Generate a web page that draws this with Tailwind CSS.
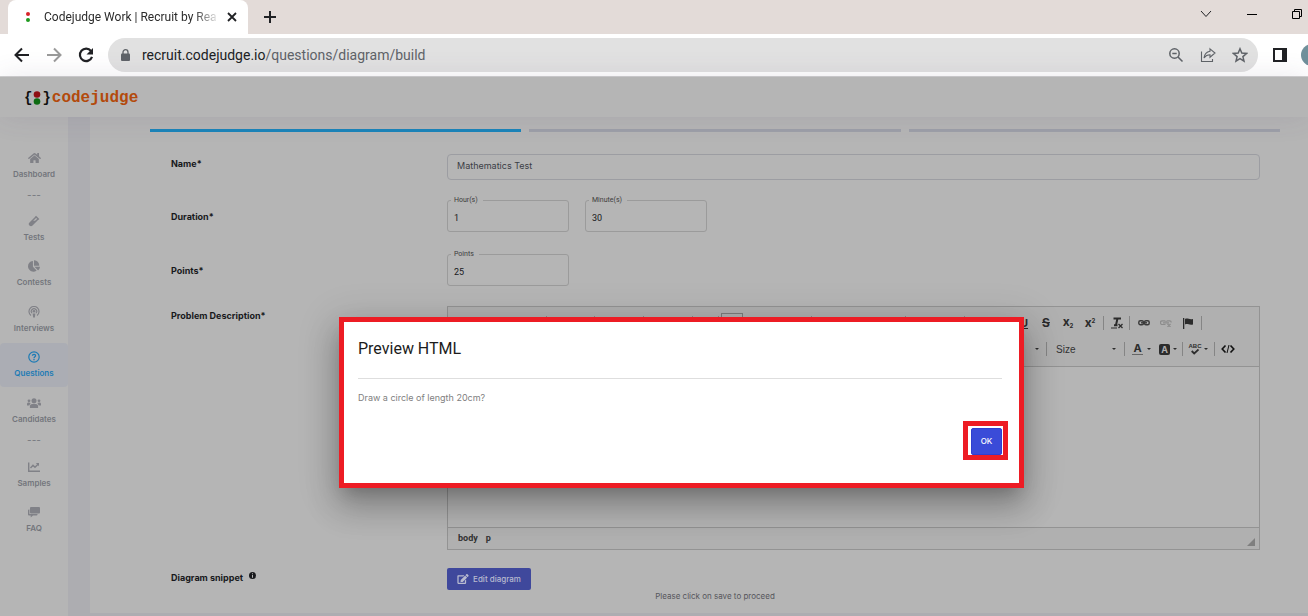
<!DOCTYPE html>
<html lang="en">
  <head>
    <meta charset="UTF-8" />
    <meta name="viewport" content="width=device-width, initial-scale=1.0" />
    <title>Codejudge Work | Recruit by Real Work</title>
    <script src="https://cdn.jsdelivr.net/npm/@tailwindcss/browser@4"></script>
  </head>
  <body class="h-screen flex flex-col overflow-hidden bg-[#b5b5b5] font-['Inter',sans-serif] text-[9px]">
    <!-- Tab strip -->
    <div class="h-[34px] shrink-0 bg-[#e3dbd8] flex items-end pl-2">
      <div class="h-[34px] w-60 bg-white rounded-t-lg flex items-center pl-4 pr-2.5 font-['Roboto',sans-serif]">
        <svg class="w-2 h-3 shrink-0" viewBox="0 0 8 12">
          <circle cx="4" cy="3" r="2" fill="#d8232a" />
          <circle cx="4" cy="9" r="2" fill="#1f9a1f" />
        </svg>
        <span class="ml-3 w-[176px] whitespace-nowrap text-xs text-[#2b2b2b] mask-r-from-85% mask-r-to-100%"
          >Codejudge Work | Recruit by Rea</span
        >
        <button type="button" aria-label="Close tab" class="ml-auto">
          <svg class="size-3" viewBox="0 0 12 12" stroke="#202124" stroke-width="1.800">
            <path d="M2 2l8 8M10 2l-8 8" />
          </svg>
        </button>
      </div>
      <button type="button" aria-label="New tab" class="ml-4 self-center">
        <svg class="size-3" viewBox="0 0 12 12" stroke="#202124" stroke-width="2">
          <path d="M6 0v12M0 6h12" />
        </svg>
      </button>
      <div class="ml-auto self-start flex items-center gap-[35px] h-7 pr-[6px]">
        <button type="button" aria-label="Search tabs">
          <svg class="w-3 h-2" viewBox="0 0 12 8" fill="none" stroke="#202124"><path d="M1 1l5 5.500 5-5.500" /></svg>
        </button>
        <button type="button" aria-label="Minimize">
          <svg class="w-[10px] h-3" viewBox="0 0 10 12"><path d="M0 6h10v1H0z" /></svg>
        </button>
        <button type="button" aria-label="Restore">
          <svg class="size-[10px]" viewBox="0 0 10 10" fill="none" stroke="#000">
            <path d="M.5 2.500h7v7h-7zM2.500 2.500v-2h7v7h-2" />
          </svg>
        </button>
      </div>
    </div>

    <!-- Toolbar -->
    <div class="h-[43px] shrink-0 bg-white border-b border-[#d0d0d0] flex items-center pl-[14px] overflow-hidden">
      <button type="button" aria-label="Back">
        <svg class="size-4" viewBox="0 0 16 16" fill="none" stroke="#202124" stroke-width="2">
          <path d="M15 8H2M8 1.500L1.500 8 8 14.500" />
        </svg>
      </button>
      <button type="button" aria-label="Forward" class="ml-4">
        <svg class="size-4" viewBox="0 0 16 16" fill="none" stroke="#9a9a9a" stroke-width="2">
          <path d="M1 8h13M8 1.500L14.500 8 8 14.500" />
        </svg>
      </button>
      <button type="button" aria-label="Reload" class="ml-4">
        <svg class="size-4" viewBox="0 0 16 16">
          <path d="M13 4A6.200 6.200 0 1 0 14 9.800" fill="none" stroke="#202124" stroke-width="2.200" />
          <path d="M15 1v6.500H8.500z" fill="#202124" />
        </svg>
      </button>
      <div class="ml-[14px] h-[34px] flex-1 rounded-full bg-[#e1e1e1] flex items-center pl-[13px] pr-[10px]">
        <svg class="w-[9px] h-3 shrink-0" viewBox="0 0 9 12">
          <path d="M2 5V3.200a2.500 2.500 0 0 1 5 0V5" fill="none" stroke="#5f6368" stroke-width="1.300" />
          <rect x="0" y="4.500" width="9" height="7.500" rx="1" fill="#5f6368" />
        </svg>
        <p class="ml-3 flex-1 font-['Roboto',sans-serif] text-sm text-[#5f6368]">
          <span class="text-[#202124]">recruit.codejudge.io</span>/questions/diagram/build
        </p>
        <div class="flex items-center gap-4">
          <button type="button" aria-label="Zoom">
            <svg class="size-4" viewBox="0 0 16 16" fill="none" stroke="#5f6368" stroke-width="1.500">
              <circle cx="6.500" cy="6.500" r="4.700" />
              <path d="M10 10l4.500 4.500M4.300 6.500h4.400" />
            </svg>
          </button>
          <button type="button" aria-label="Share">
            <svg class="size-4" viewBox="0 0 16 16" fill="none" stroke="#5f6368" stroke-width="1.100">
              <path d="M1.500 4.500v10h11v-2.500" />
              <path d="M10 1.800l5 4.200-5 4.200V7.800C7.500 7.800 5.500 8.800 4 11c.5-4 2.500-6.300 6-6.800z" />
            </svg>
          </button>
          <button type="button" aria-label="Bookmark">
            <svg class="size-4" viewBox="0 0 16 16" fill="none" stroke="#5f6368" stroke-width="1.500">
              <path d="M8 1.800l1.800 4.300 4.700.4-3.600 3.100 1.100 4.600L8 11.700l-4 2.500 1.100-4.600-3.600-3.100 4.700-.4z" />
            </svg>
          </button>
        </div>
      </div>
      <button type="button" aria-label="Side panel" class="ml-[15px]">
        <svg class="size-[14px]" viewBox="0 0 14 14">
          <path d="M0 0h14v14H0z" fill="#202124" />
          <path d="M2 2h7v10H2z" fill="#fff" />
        </svg>
      </button>
      <div class="ml-[14px] -mr-[15px] size-[22px] shrink-0 rounded-full bg-[#70909b]"></div>
    </div>

    <div class="relative flex-1 flex flex-col min-h-0">
      <header class="relative z-10 h-10 shrink-0 bg-[#b5b5b5] shadow-[0_0_28px_rgba(82,63,105,0.12)] flex items-center pt-0.5 pl-6">
        <a href="#" class="flex items-center font-['Liberation_Mono',monospace] font-bold text-base leading-5">
          <span class="flex items-center gap-px text-sm leading-5 text-[#111]"
            >{<svg class="w-2 h-[14px]" viewBox="0 0 8 14">
              <circle cx="4" cy="3.500" r="3.300" fill="#8f0f14" />
              <circle cx="4" cy="10.500" r="3.300" fill="#0d6b12" />
            </svg>}</span
          >
          <span class="ml-px text-[#b34a0c]">codejudge</span>
        </a>
      </header>

      <div class="flex-1 flex min-h-0">
        <!-- Sidebar -->
        <nav class="w-[68px] shrink-0 bg-[#b5b5b5] pt-[26px] text-center text-[8px] leading-3 font-semibold text-[#73757c]">
          <a href="#" class="h-11 flex flex-col items-center justify-center gap-1 pt-px">
            <svg class="w-[13px] h-3" viewBox="0 0 576 512" fill="#808187">
              <path
                d="M280.370 148.260L96 300.110V464a16 16 0 0 0 16 16l112.060-.29a16 16 0 0 0 15.920-16V368a16 16 0 0 1 16-16h64a16 16 0 0 1 16 16v95.640a16 16 0 0 0 16 16.050L464 480a16 16 0 0 0 16-16V300L295.670 148.260a12.190 12.190 0 0 0-15.300 0zM571.600 251.470L488 182.560V44.050a12 12 0 0 0-12-12h-56a12 12 0 0 0-12 12v72.610L318.470 43a48 48 0 0 0-61 0L4.340 251.470a12 12 0 0 0-1.600 16.900l25.500 31A12 12 0 0 0 45.150 301l235.220-193.740a12.190 12.190 0 0 1 15.300 0L530.900 301a12 12 0 0 0 16.900-1.600l25.500-31a12 12 0 0 0-1.700-16.930z"
              />
            </svg>
            Dashboard
          </a>
          <p class="h-[19px] leading-4 font-normal text-[10px]">---</p>
          <div class="h-[226px] flex flex-col justify-between">
            <a href="#" class="h-11 flex flex-col items-center justify-center gap-1 pt-px">
              <svg class="size-3" viewBox="0 0 12 12" fill="none" stroke="#808187" stroke-width="1.500">
                <path d="M7.500 1.200l3.300 3.300M8 2L2 8a1.400 1.400 0 0 0 2 2l6-6" />
                <path d="M4.500 5.700h4L4 10.200a1.500 1.500 0 0 1-2.200-2.200z" fill="#808187" stroke="none" />
              </svg>
              Tests
            </a>
            <a href="#" class="h-11 flex flex-col items-center justify-center gap-1 pt-px">
              <svg class="size-3" viewBox="0 0 544 512" fill="#808187">
                <path
                  d="M527.790 288H290.500l158.030 158.030c6.040 6.040 15.980 6.530 22.190.68 38.700-36.460 65.320-85.610 73.130-140.860 1.340-9.460-6.510-17.850-16.060-17.850zm-15.830-64.800C503.720 103.740 408.260 8.280 288.800.04 279.680-.59 272 7.100 272 16.240V240h223.770c9.140 0 16.820-7.680 16.190-16.800zM224 288V50.710c0-9.550-8.390-17.400-17.840-16.060C86.990 51.490-4.100 155.600.14 280.370 4.500 408.510 114.830 513.590 243.030 511.980c50.400-.63 96.970-16.870 135.260-44.030 7.900-5.600 8.420-17.230 1.570-24.080L224 288z"
                />
              </svg>
              Contests
            </a>
            <a href="#" class="h-11 flex flex-col items-center justify-center gap-1 pt-px">
              <svg class="size-3" viewBox="0 0 12 12" fill="none" stroke="#808187">
                <path d="M3 9.500a5 5 0 1 1 6 0M4 7.200a2.700 2.700 0 1 1 4 0" stroke-width="1.200" />
                <circle cx="6" cy="5.300" r="1.300" fill="#808187" stroke="none" />
                <path d="M4.600 7.500h2.800l-.5 4H5.100z" fill="#808187" stroke="none" />
              </svg>
              Interviews
            </a>
            <a href="#" class="h-11 flex flex-col items-center justify-center gap-1 pt-px rounded bg-[#abadb4] text-[#1c7bb5]">
              <svg class="size-3" viewBox="0 0 12 12" fill="none" stroke="#1c7bb5">
                <circle cx="6" cy="6" r="5.200" stroke-width="1.200" />
                <path d="M4.400 4.800C4.500 3 7.600 3 7.600 4.800 7.600 5.900 6 5.800 6 7.200M6 8v1.300" stroke-width="1.300" />
              </svg>
              Questions
            </a>
            <a href="#" class="h-11 flex flex-col items-center justify-center gap-1 pt-px">
              <svg class="w-[14px] h-3" viewBox="0 0 14 12" fill="#808187">
                <circle cx="7" cy="3.700" r="2.500" />
                <circle cx="2" cy="3.800" r="1.400" />
                <circle cx="12" cy="3.800" r="1.400" />
                <path d="M2.900 11V9c0-3 8.200-3 8.200 0v2zM0 8.500V7c0-1.600 2.500-1.800 3.600-.9L2.300 8.500zM14 8.500V7c0-1.600-2.500-1.800-3.600-.9l1.300 2.400z" />
              </svg>
              Candidates
            </a>
          </div>
          <p class="h-5 leading-4 font-normal text-[10px]">---</p>
          <a href="#" class="h-11 flex flex-col items-center justify-center gap-1 pt-px">
            <svg class="size-3" viewBox="0 0 12 12" fill="none" stroke="#808187" stroke-width="1.400">
              <path d="M.7 1.500v8.800H12M2.500 7l2.500-2.700 2 2L10 3.300" />
              <path d="M7.800 2H11v3.300z" fill="#808187" stroke="none" />
            </svg>
            Samples
          </a>
          <a href="#" class="mt-px h-11 flex flex-col items-center justify-center gap-1 pt-px">
            <svg class="size-3" viewBox="0 0 12 12" fill="#808187">
              <path d="M3 1h8a1 1 0 0 1 1 1v4.500a1 1 0 0 1-1 1H3a1 1 0 0 1-1-1V2a1 1 0 0 1 1-1z" />
              <path d="M0 4.500a1 1 0 0 1 1-1h.4V8h8.100v.5a1 1 0 0 1-1 1H5L2.700 11.500v-2H1a1 1 0 0 1-1-1z" />
            </svg>
            FAQ
          </a>
        </nav>

        <main class="flex-1 min-w-0 bg-[#adadb1] pl-[22px]">
          <div class="bg-[#b5b5b5] h-[496px] pl-[60px] pr-7 pt-3">
            <!-- Step bars -->
            <div class="grid grid-cols-3 gap-2">
              <div class="h-[3px] bg-[#1b84b9]"></div>
              <div class="h-[3px] bg-[#9d9fa8]"></div>
              <div class="h-[3px] bg-[#9d9fa8]"></div>
            </div>

            <form class="pl-[21px] pr-5 pt-[22px] text-[#18191c]">
              <div class="grid grid-cols-[276px_1fr]">
                <label for="name" class="pt-1 leading-3 font-bold">Name*</label>
                <input
                  id="name"
                  value="Mathematics Test"
                  class="h-[26px] w-full rounded-sm border border-[#9c9da2] px-[9px] pb-1 text-[#3b3d45]"
                />
              </div>
              <div class="mt-5 grid grid-cols-[276px_1fr]">
                <span class="pt-[11px] leading-3 font-bold">Duration*</span>
                <div class="flex gap-4 font-['Roboto',sans-serif]">
                  <div class="relative">
                    <label for="hours" class="absolute left-1 -top-1 bg-[#b5b5b5] pl-[3px] pr-[5px] text-[7px] leading-2 text-[#3c3c3c]">Hour(s)</label>
                    <input id="hours" value="1" class="h-8 w-[122px] rounded-[3px] border border-[#9b9b9b] px-1.5 pt-1" />
                  </div>
                  <div class="relative">
                    <label for="minutes" class="absolute left-1 -top-1 bg-[#b5b5b5] pl-[3px] pr-[5px] text-[7px] leading-2 text-[#3c3c3c]">Minute(s)</label>
                    <input id="minutes" value="30" class="h-8 w-[122px] rounded-[3px] border border-[#9b9b9b] px-1.5 pt-1" />
                  </div>
                </div>
              </div>
              <div class="mt-[22px] grid grid-cols-[276px_1fr]">
                <span class="pt-[11px] leading-3 font-bold">Points*</span>
                <div class="relative font-['Roboto',sans-serif]">
                  <label for="points" class="absolute left-1 -top-1 bg-[#b5b5b5] pl-[3px] pr-[5px] text-[7px] leading-2 text-[#3c3c3c]">Points</label>
                  <input id="points" value="25" class="h-8 w-[122px] rounded-[3px] border border-[#9b9b9b] px-1.5 pt-1" />
                </div>
              </div>
              <div class="mt-5 grid grid-cols-[276px_1fr]">
                <label for="description" class="pt-1 leading-3 font-bold">Problem Description*</label>
                <!-- Rich text editor -->
                <div class="border border-[#939393]">
                  <div class="h-[60px] bg-[#b0b0b0] border-b border-[#939393] pt-[3px] text-[#2c2c2c]">
                    <div class="h-[26px] flex items-center">
                      <span class="w-[99px] h-[14px] border-r border-[#8a8a8a]"></span>
                      <span class="w-12 h-[14px] border-r border-[#8a8a8a]"></span>
                      <span class="w-[49px] h-[14px] border-r border-[#8a8a8a]"></span>
                      <span class="w-[49px] h-[14px] border-r border-[#8a8a8a]"></span>
                      <span class="w-[26px] h-[14px] border-r border-[#8a8a8a]"></span>
                      <button type="button" aria-label="Source" class="ml-0.5 w-[22px] h-5 border border-[#7c7c7c]"></button>
                      <span class="w-[69px] h-[14px] border-r border-[#8a8a8a]"></span>
                      <span class="w-[94px] h-[14px] border-r border-[#8a8a8a]"></span>
                      <span class="w-[59px] h-[14px] border-r border-[#8a8a8a]"></span>
                      <div class="ml-auto mr-[57px] flex items-center">
                        <button type="button" class="w-[22px] text-[11px] font-bold underline">U</button>
                        <button type="button" class="w-[22px] text-xs font-bold line-through">S</button>
                        <button type="button" aria-label="Subscript" class="w-[22px] flex justify-center text-xs leading-3 font-bold">x<span class="pt-1.5 text-[6px] leading-2">2</span></button>
                        <button type="button" aria-label="Superscript" class="w-[22px] flex justify-center text-xs leading-3 font-bold">x<span class="text-[6px] leading-2">2</span></button>
                        <span class="ml-0.5 w-px h-[14px] bg-[#858585]"></span>
                        <button type="button" aria-label="Remove format" class="w-[25px] flex justify-center">
                          <svg class="size-3" viewBox="0 0 12 12" fill="none" stroke="#2c2c2c" stroke-width="2">
                            <path d="M2.500 1.500h7.500M6.500 1.500L5 8M3 8.300h3.500" />
                            <path d="M0 11h6" stroke-width="1" />
                            <path d="M7.500 7l4 4M11.500 7l-4 4" stroke-width="1.300" />
                          </svg>
                        </button>
                        <span class="w-px h-[14px] bg-[#858585]"></span>
                        <button type="button" aria-label="Link" class="ml-[3px] w-[22px] flex justify-center">
                          <svg class="w-3 h-2" viewBox="0 0 12 8" fill="none" stroke="#3a3a3a" stroke-width="1.400">
                            <rect x=".8" y="1.800" width="4.700" height="4" rx="1.500" />
                            <rect x="6.500" y="1.800" width="4.700" height="4" rx="1.500" />
                            <path d="M3 3.800h6" />
                          </svg>
                        </button>
                        <button type="button" aria-label="Unlink" class="w-[22px] flex justify-center">
                          <svg class="w-3 h-2" viewBox="0 0 12 8" fill="none" stroke="#8c8c8c" stroke-width="1.200">
                            <path d="M5.500 5.500H2.300a1.600 1.600 0 0 1 0-3.700h2.200a1 1 0 0 1 1 1M3 3.800h6M6.500 2.800a1 1 0 0 1 1-1h2.200c1 0 1.500.8 1.500 1.700M7.500 5l3 3M10.500 5l-3 3" />
                          </svg>
                        </button>
                        <button type="button" aria-label="Anchor" class="w-[22px] flex justify-center">
                          <svg class="w-3 h-[11px]" viewBox="0 0 12 11" fill="#2c2c2c">
                            <path d="M1 0h1.300v11H1zM3 1c2.500-1.200 4 .8 8 0v5.500c-4 .8-5.500-1.200-8 0z" />
                          </svg>
                        </button>
                        <span class="ml-0.5 w-px h-[14px] bg-[#858585]"></span>
                      </div>
                    </div>
                    <div class="h-[26px] flex items-center justify-end pr-[24px]">
                      <span class="border-x-2 border-t-2 border-x-transparent border-t-[#2c2c2c]"></span>
                      <span class="ml-[7px] w-px h-[14px] bg-[#858585]"></span>
                      <button type="button" class="ml-[9px] w-[60px] flex items-center justify-between font-['Liberation_Sans',sans-serif] text-[10px] text-[#333]">
                        Size
                        <span class="border-x-2 border-t-2 border-x-transparent border-t-[#2c2c2c]"></span>
                      </button>
                      <span class="ml-2 w-px h-[14px] bg-[#858585]"></span>
                      <button type="button" aria-label="Text color" class="ml-[7px] flex items-center gap-1">
                        <span class="w-[11px] border-b border-[#666] text-[11px] leading-[11px] font-bold">A</span>
                        <span class="border-x-2 border-t-2 border-x-transparent border-t-[#2c2c2c]"></span>
                      </button>
                      <button type="button" aria-label="Background color" class="ml-2 flex items-center gap-[3px]">
                        <span class="w-[11px] rounded-xs bg-[#2c2c2c] text-[9px] leading-[11px] font-bold text-[#b0b0b0]">A</span>
                        <span class="border-x-2 border-t-2 border-x-transparent border-t-[#2c2c2c]"></span>
                      </button>
                      <span class="ml-[5px] w-px h-[14px] bg-[#858585]"></span>
                      <button type="button" aria-label="Spell check" class="ml-1.5 flex items-center gap-[3px]">
                        <span class="flex flex-col items-center w-3">
                          <span class="font-['Liberation_Sans',sans-serif] text-[6px] leading-[6px] font-bold">ABC</span>
                          <svg class="w-2 h-1.5" viewBox="0 0 8 6" fill="none" stroke="#2c2c2c" stroke-width="1.800"><path d="M.7 2l2.500 2.500L7.500.5" /></svg>
                        </span>
                        <span class="border-x-2 border-t-2 border-x-transparent border-t-[#2c2c2c]"></span>
                      </button>
                      <span class="ml-1.5 w-px h-[14px] bg-[#858585]"></span>
                      <button type="button" aria-label="Insert code" class="ml-1.5">
                        <svg class="w-[14px] h-[10px]" viewBox="0 0 14 10" fill="none" stroke="#111" stroke-width="1.600">
                          <path d="M4.500 1.500L1.200 5l3.300 3.500M9.500 1.500L12.800 5 9.500 8.500" />
                          <path d="M8 1L6 9" stroke-width="1" />
                        </svg>
                      </button>
                    </div>
                  </div>
                  <textarea id="description" class="block h-40 w-full resize-none"></textarea>
                  <div class="h-[22px] bg-[#b0b0b0] border-t border-[#939393] flex items-center gap-2 pt-px pl-[10px] pr-1 font-['Roboto',sans-serif] font-bold text-[#333]">
                    <span>body</span>
                    <span>p</span>
                    <svg class="ml-auto mt-1.5 size-2" viewBox="0 0 8 8"><path d="M8 0v8H0z" fill="#7f7f7f" /></svg>
                  </div>
                </div>
              </div>
              <div class="mt-[18px] grid grid-cols-[276px_1fr]">
                <span class="flex gap-1.5 pt-1 leading-3 font-bold"
                  >Diagram snippet
                  <svg class="size-[7px]" viewBox="0 0 7 7">
                    <circle cx="3.500" cy="3.500" r="3.500" fill="#18191c" />
                    <path d="M3 1.200h1v1H3zM3 3h1v2.700H3z" fill="#b5b5b5" />
                  </svg>
                </span>
                <button
                  type="button"
                  class="w-[84px] h-[22px] rounded-xs bg-[#3f489c] flex items-center justify-center gap-1 pb-px text-[8px] font-medium text-[#b9bbd0]"
                >
                  <svg class="w-3 h-[10px]" viewBox="0 0 576 512" fill="#b9bbd0">
                    <path
                      d="M402.600 83.200l90.200 90.200c3.800 3.800 3.800 10 0 13.800L274.400 405.600l-92.800 10.300c-12.400 1.400-22.900-9.100-21.500-21.500l10.300-92.800L388.800 83.200c3.800-3.800 10-3.800 13.800 0zm162-22.900l-48.800-48.800c-15.200-15.200-39.900-15.200-55.200 0l-35.400 35.400c-3.800 3.800-3.800 10 0 13.800l90.200 90.200c3.800 3.800 10 3.800 13.800 0l35.400-35.400c15.200-15.300 15.200-40 0-55.200zM384 346.200V448H64V128h229.800c3.200 0 6.200-1.300 8.500-3.500l40-40c7.600-7.600 2.200-20.500-8.500-20.500H48C21.500 64 0 85.500 0 112v352c0 26.500 21.500 48 48 48h352c26.500 0 48-21.500 48-48V306.200c0-10.700-12.900-16-20.500-8.500l-40 40c-2.200 2.300-3.500 5.300-3.500 8.500z"
                    />
                  </svg>
                  Edit diagram
                </button>
              </div>
            </form>
            <p class="text-center text-[8px] leading-3 text-[#55565c]">Please click on save to proceed</p>
          </div>
        </main>
      </div>

      <!-- Preview dialog -->
      <div
        role="dialog"
        aria-labelledby="preview-title"
        class="absolute z-20 left-[339px] top-60 w-[685px] h-[171px] bg-white border-5 border-[#ed1c24] px-[14px] pt-[15px] shadow-[0_9px_15px_-7px_rgba(0,0,0,0.2),0_19px_30px_2px_rgba(0,0,0,0.2),0_7px_37px_6px_rgba(0,0,0,0.12)]"
      >
        <h2 id="preview-title" class="font-['Roboto',sans-serif] text-base leading-6 font-normal text-[#1c1c1c]">Preview HTML</h2>
        <hr class="mt-[17px] mr-[3px] border-[#dedede]" />
        <p class="mt-[13px] leading-3 text-[#808080]">Draw a circle of length 20cm?</p>
        <div class="mt-[17px] -mr-[3px] flex justify-end">
          <div class="border-5 border-[#ed1c24] pl-[3px] pr-px pt-0.5">
            <button type="button" class="block w-[31px] h-[27px] rounded-xs bg-[#3a4bd8] border border-[#2f3fd0] pb-0.5 text-[8px] font-medium text-white">OK</button>
          </div>
        </div>
      </div>
    </div>
  </body>
</html>
